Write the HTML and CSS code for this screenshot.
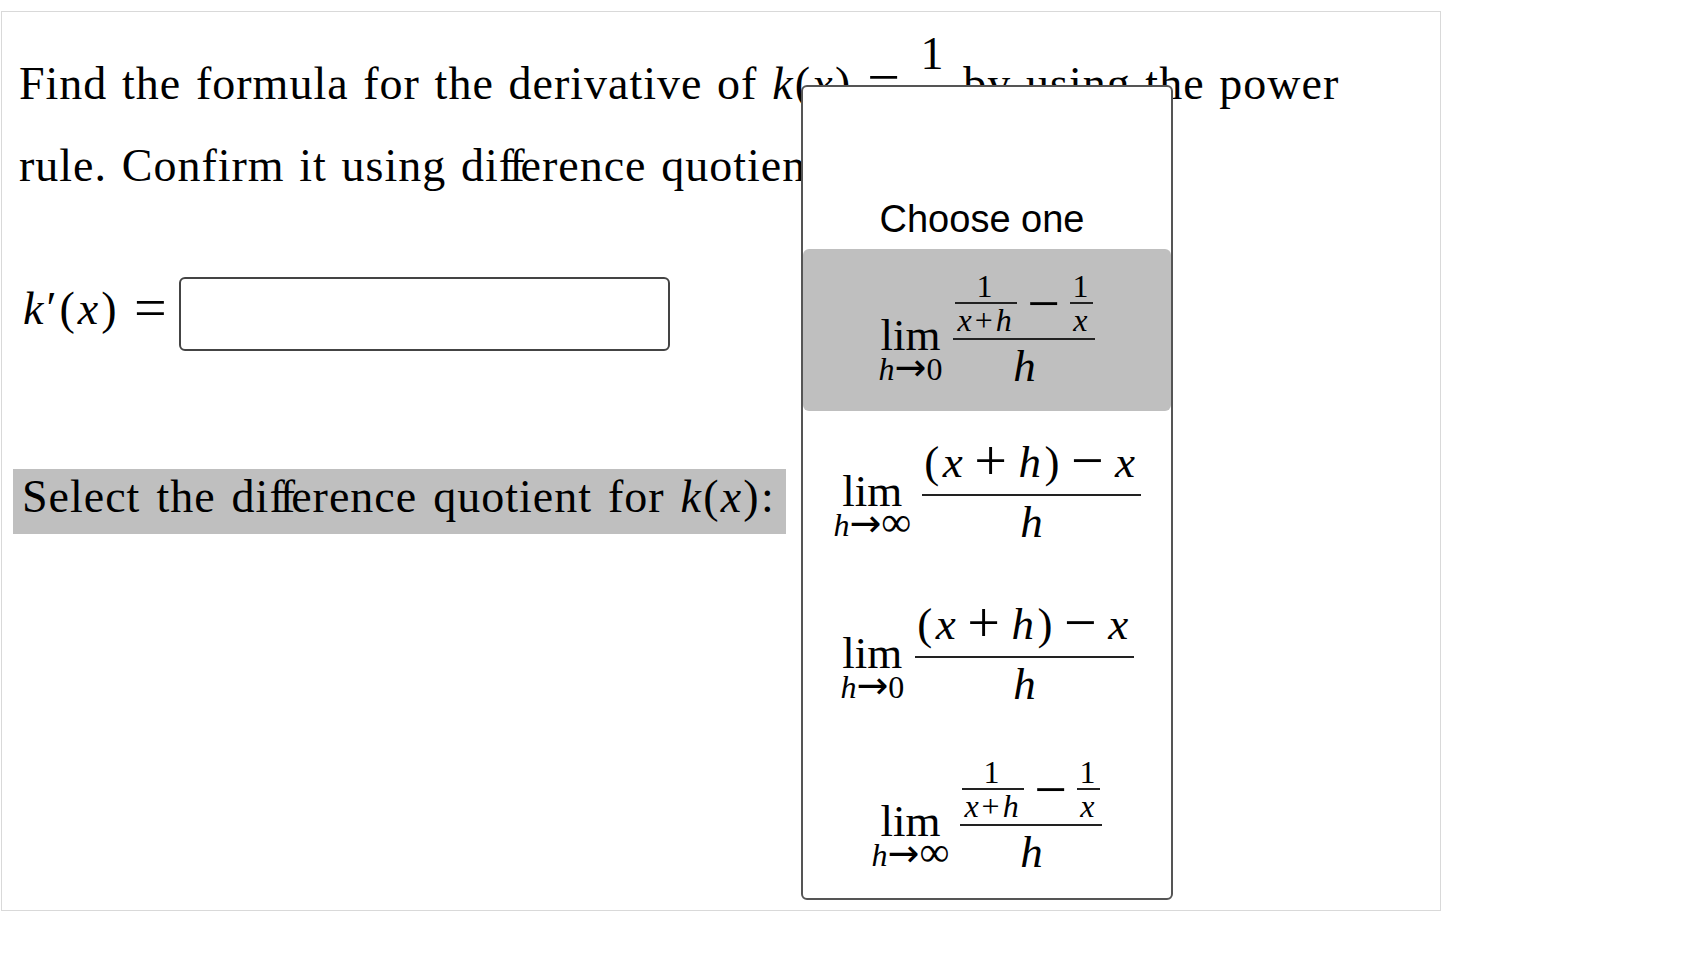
FILE: index.html
```html
<!DOCTYPE html>
<html lang="en">
  <head>
    <meta charset="UTF-8" />
    <meta name="viewport" content="width=device-width, initial-scale=1.0" />
    <title>Difference quotient</title>
    <link rel="stylesheet" href="styles.css">
  </head>
  <body>
    <div class="panel">
      <p class="question">
        Find the formula for the derivative of <span class="math"><i>k</i>(<i>x</i>)</span> <span class="equals">=</span> <span class="inline-frac"><span class="inline-num">1</span><span class="inline-den"><i>x</i></span></span> by using the power rule. Confirm it using di<span class="ff">ff</span>erence quotients.
      </p>

      <div class="answer-row">
        <span class="answer-label"><i>k</i>′(<i>x</i>) <span class="equals">=</span></span>
        <input class="answer-input" type="text" />
      </div>

      <div class="select-band">Select the di<span class="ff">ff</span>erence quotient for <span class="math"><i>k</i>(<i>x</i>)</span>:</div>

      <div class="popup">
        <div class="popup-title">Choose one</div>
        <div class="options">
          <div class="option selected">
            <div class="lim"><span class="lim-word">lim</span><span class="lim-sub"><i>h</i><span class="arrow">→</span>0</span></div>
            <div class="frac">
              <div class="num compound">
                <div class="small-frac"><span class="small-num">1</span><span class="small-den"><i>x</i>+<i>h</i></span></div>
                <span class="minus">−</span>
                <div class="small-frac"><span class="small-num">1</span><span class="small-den"><i>x</i></span></div>
              </div>
              <div class="den"><i>h</i></div>
            </div>
          </div>

          <div class="option">
            <div class="lim"><span class="lim-word">lim</span><span class="lim-sub"><i>h</i><span class="arrow">→</span><span class="inf">∞</span></span></div>
            <div class="frac">
              <div class="num">(<i>x</i><span class="op">+</span><i>h</i>)<span class="op">−</span><i>x</i></div>
              <div class="den"><i>h</i></div>
            </div>
          </div>

          <div class="option">
            <div class="lim"><span class="lim-word">lim</span><span class="lim-sub"><i>h</i><span class="arrow">→</span>0</span></div>
            <div class="frac">
              <div class="num">(<i>x</i><span class="op">+</span><i>h</i>)<span class="op">−</span><i>x</i></div>
              <div class="den"><i>h</i></div>
            </div>
          </div>

          <div class="option">
            <div class="lim"><span class="lim-word">lim</span><span class="lim-sub"><i>h</i><span class="arrow">→</span><span class="inf">∞</span></span></div>
            <div class="frac">
              <div class="num compound">
                <div class="small-frac"><span class="small-num">1</span><span class="small-den"><i>x</i>+<i>h</i></span></div>
                <span class="minus">−</span>
                <div class="small-frac"><span class="small-num">1</span><span class="small-den"><i>x</i></span></div>
              </div>
              <div class="den"><i>h</i></div>
            </div>
          </div>
        </div>
      </div>
    </div>
  </body>
</html>
```

FILE: styles.css
```css
body {
  margin: 11px 0 0 1px;
  background: #fff;
  color: #000;
  font-family: "Liberation Serif", serif;
  font-size: 45px;
}

.panel {
  position: relative;
  box-sizing: border-box;
  width: 1440px;
  height: 900px;
  padding: 22px 0 0 11px;
  border: 1px solid #d9d9d9;
}

.question {
  width: 1345px;
  margin: 0 0 0 6px;
  font-size: 46px;
  line-height: 82px;
  letter-spacing: 1px;
  word-spacing: 2.2px;
}

.math {
  letter-spacing: 2.2px;
}

.ff {
  letter-spacing: -4px;
}

.equals {
  font-size: 58px;
  line-height: 0;
  vertical-align: -3px;
}

.inline-frac {
  display: inline-flex;
  flex-direction: column;
  align-items: center;
  vertical-align: 30px;
  letter-spacing: 0;
}

.inline-num {
  line-height: 40px;
  padding: 0 5px 13px;
  border-bottom: 2px solid #222;
}

.inline-den {
  line-height: 36px;
}

.answer-row {
  display: flex;
  align-items: center;
  margin: 70px 0 0 10px;
}

.answer-label {
  width: 156px;
  margin-bottom: 11px;
  font-size: 46px;
  letter-spacing: 3px;
  white-space: nowrap;
}

.answer-input {
  box-sizing: border-box;
  width: 491px;
  height: 74px;
  border: 2px solid #444;
  border-radius: 6px;
  outline: none;
  background: #fff;
}

.select-band {
  box-sizing: border-box;
  width: 773px;
  height: 65px;
  margin-top: 118px;
  padding-left: 9px;
  background: #bfbfbf;
  font-size: 46px;
  line-height: 56px;
  letter-spacing: 1px;
  word-spacing: 3.5px;
  white-space: nowrap;
}

.popup {
  position: absolute;
  left: 799px;
  top: 73px;
  box-sizing: border-box;
  width: 372px;
  height: 815px;
  padding-top: 114px;
  border: 2px solid #555;
  border-radius: 6px;
  background: #fff;
}

.popup-title {
  padding-right: 10px;
  margin-bottom: 11px;
  font-family: "Liberation Sans", sans-serif;
  font-size: 38px;
  line-height: 37px;
  text-align: center;
}

.options {
  display: grid;
  grid-template-rows: 162px 156px 162px 168px;
}

.option {
  display: flex;
  align-items: flex-end;
  justify-content: center;
  gap: 11px;
  box-sizing: border-box;
  padding-bottom: 19px;
  border-radius: 6px;
}

.option.selected {
  background: #bfbfbf;
}

.lim {
  display: flex;
  flex-direction: column;
  align-items: center;
}

.lim-word {
  line-height: 24px;
}

.lim-sub {
  font-size: 32px;
  line-height: 45px;
  white-space: nowrap;
}

.arrow {
  font-family: "DejaVu Sans", sans-serif;
  font-size: 38px;
  line-height: 0;
}

.inf {
  font-size: 42px;
  line-height: 0;
}

.frac {
  display: flex;
  flex-direction: column;
  align-items: stretch;
}

.num {
  padding: 0 2px;
  border-bottom: 2px solid #222;
  line-height: 64px;
  letter-spacing: 3.5px;
  white-space: nowrap;
}

.op {
  margin: 0 8px;
  font-size: 58px;
  line-height: 0;
  vertical-align: -3px;
}

.den {
  line-height: 52px;
  text-align: center;
}

.compound {
  display: flex;
  align-items: center;
  padding-bottom: 2px;
  line-height: normal;
  letter-spacing: 3px;
}

.small-frac {
  display: flex;
  flex-direction: column;
  align-items: stretch;
  font-size: 32px;
  line-height: 32px;
  text-align: center;
}

.small-num {
  padding: 0 2px;
  border-bottom: 2px solid #222;
}

.small-den {
  padding: 0 2px;
}

.minus {
  margin: 0 10.5px;
  font-size: 58px;
  line-height: 45px;
  letter-spacing: 0;
}
```
